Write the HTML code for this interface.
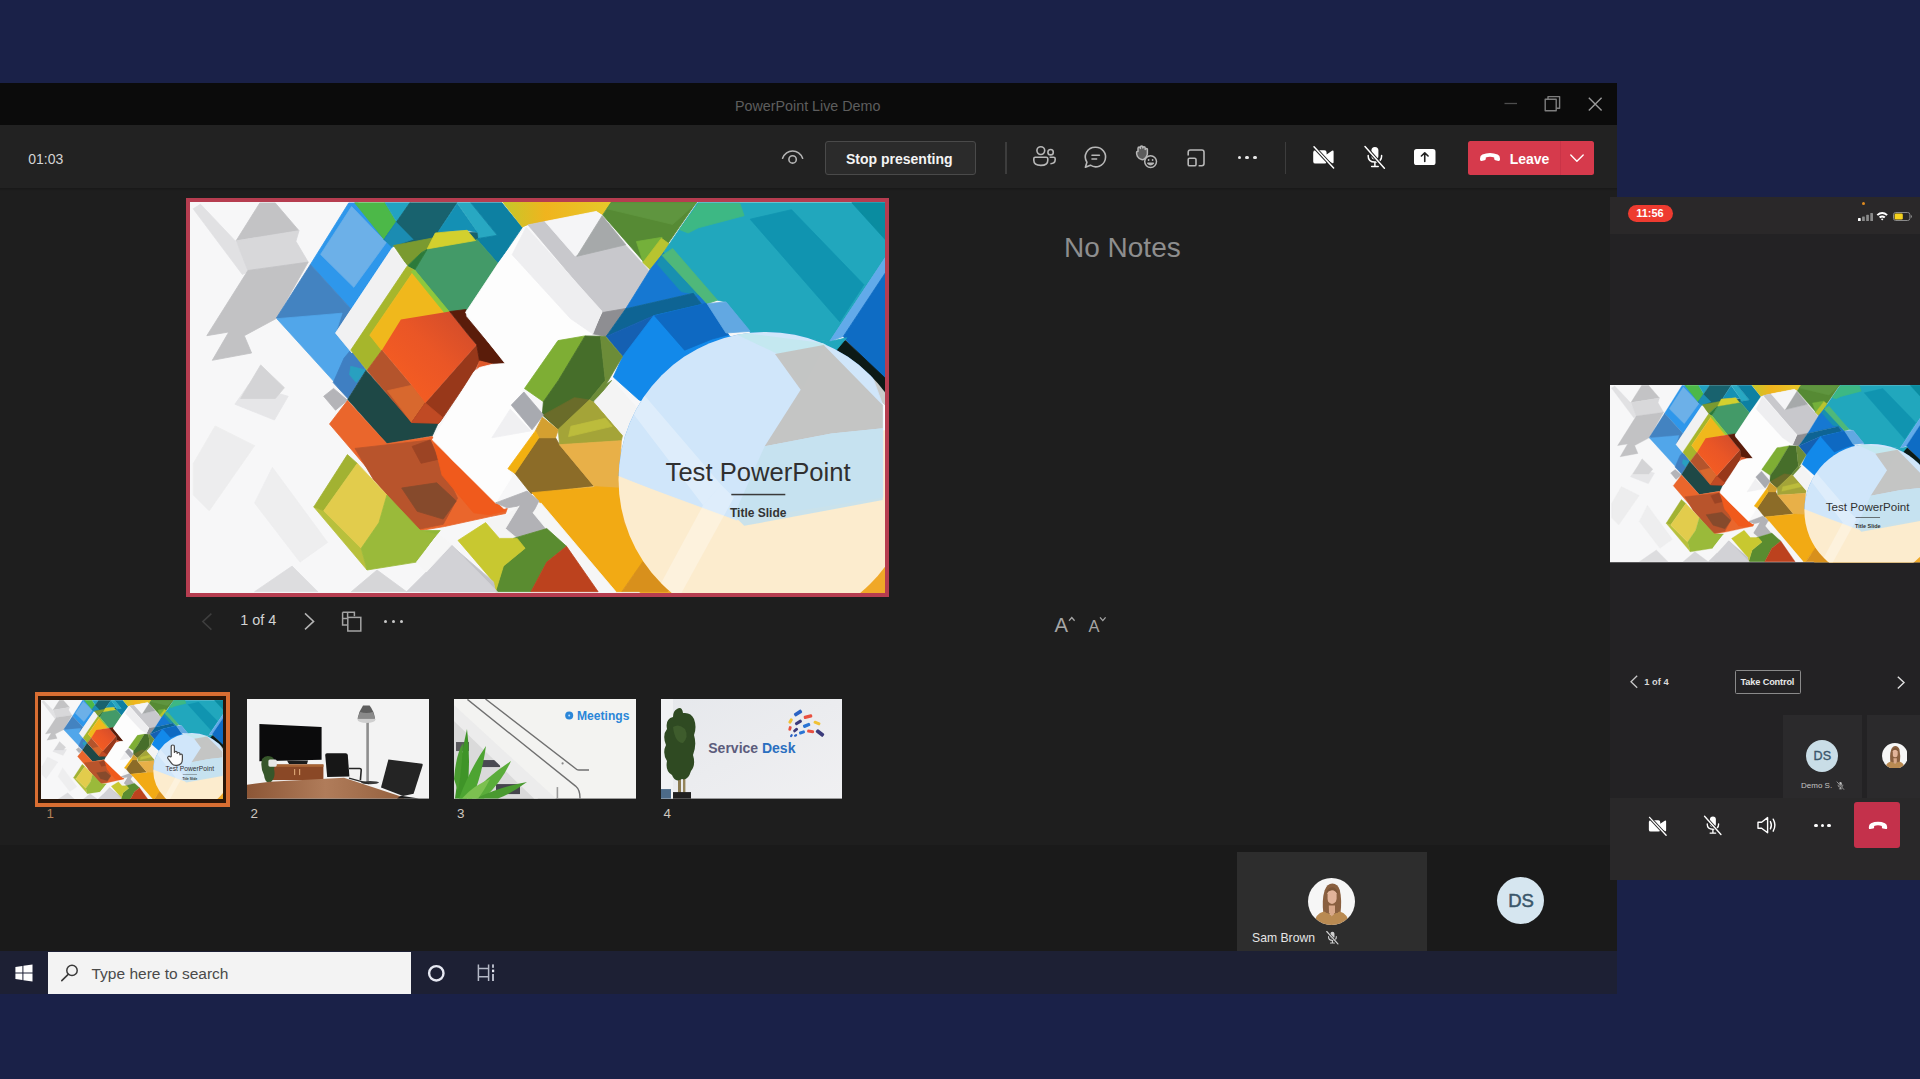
<!DOCTYPE html><html><head><meta charset="utf-8"><title>PowerPoint Live Demo</title><style>
*{box-sizing:border-box;margin:0;padding:0}
html,body{width:1920px;height:1079px;overflow:hidden;background:#1a2148;font-family:"Liberation Sans",sans-serif}
.abs{position:absolute}
#win{position:absolute;left:0;top:83px;width:1617px;height:868px;background:#1d1d1d;overflow:hidden}
#titlebar{position:absolute;left:0;top:0;width:1617px;height:42px;background:#0b0b0b}
#titlebar .t{position:absolute;left:735px;top:16.4px;line-height:1;font-size:14.3px;color:#5e5e5e;white-space:nowrap;letter-spacing:0}
#toolbar{position:absolute;left:0;top:42px;width:1617px;height:63px;background:#222222}
#content{position:absolute;left:0;top:105px;width:1617px;height:657px;background:linear-gradient(#181818,#1e1e1e 3px,#1e1e1e)}
#bottomstrip{position:absolute;left:0;top:762px;width:1617px;height:106px;background:#1a1a1a}
.txt{position:absolute;white-space:nowrap}
#taskbar{position:absolute;left:0;top:951px;width:1617px;height:42.5px;background:#1d2034}
#search{position:absolute;left:48px;top:0.5px;width:363px;height:42.5px;background:#f3f3f3}
#phone{position:absolute;left:1610px;top:197px;width:310px;height:683px;background:#232224;overflow:hidden}
</style></head><body>
<svg width="0" height="0" style="position:absolute"><defs><linearGradient id="gcube" x1="0" y1="1" x2="1" y2="0"><stop offset="0" stop-color="#fa6020"/><stop offset="0.55" stop-color="#ea5626"/><stop offset="1" stop-color="#cc4a2c"/></linearGradient><linearGradient id="gyel" x1="0" y1="0" x2="1" y2="0"><stop offset="0" stop-color="#c4c82a"/><stop offset="0.4" stop-color="#f0b41e"/><stop offset="1" stop-color="#e6c82a"/></linearGradient><clipPath id="ccirc"><circle cx="576" cy="277.5" r="147.5"/></clipPath><symbol id="art" viewBox="0 0 695.5 391.5" preserveAspectRatio="none"><rect width="695.5" height="391.5" fill="#f7f7f8"/><polygon points="3.2,6.8 10.5,2.2 45.1,38.8 59.8,68.9 52.4,72.5" fill="#e1e1e3" stroke="#e1e1e3" stroke-width="0.8" stroke-linejoin="round"/><polygon points="58.7,182.5 98.2,194.3 84.4,218.0 44.9,202.2" fill="#e6e6e8" stroke="#e6e6e8" stroke-width="0.8" stroke-linejoin="round"/><polygon points="25.2,223.9 64.6,243.7 19.2,308.8 3.4,293.0 3.4,261.4" fill="#ededee" stroke="#ededee" stroke-width="0.8" stroke-linejoin="round"/><polygon points="64.6,389.7 102.1,364.1 127.8,389.7" fill="#dddddf" stroke="#dddddf" stroke-width="0.8" stroke-linejoin="round"/><polygon points="161.3,389.7 187.0,368.0 216.6,389.7" fill="#d6d6d8" stroke="#d6d6d8" stroke-width="0.8" stroke-linejoin="round"/><polygon points="82.4,265.4 137.6,340.4 110.0,360.1 64.6,300.9" fill="#eeeeef" stroke="#eeeeef" stroke-width="0.8" stroke-linejoin="round"/><polygon points="70.7,162.9 94.4,185.7 85.3,196.5 50.6,196.5" fill="#d4d4d6" stroke="#d4d4d6" stroke-width="0.8" stroke-linejoin="round"/><polygon points="133.7,194.3 143.6,186.4 157.4,198.3 145.5,208.2" fill="#b4b4b8" stroke="#b4b4b8" stroke-width="0.8" stroke-linejoin="round"/><polygon points="69.8,1.0 85.3,1.0 109.0,28.7 46.1,38.8" fill="#c3c3c5" stroke="#c3c3c5" stroke-width="0.8" stroke-linejoin="round"/><polygon points="46.1,38.8 109.0,28.7 105.9,39.3 118.2,60.1 57.9,68.5" fill="#d8d8da" stroke="#d8d8da" stroke-width="0.8" stroke-linejoin="round"/><polygon points="57.9,68.5 118.2,60.1 86.4,116.4 54.3,133.7 61.6,151.0 22.3,158.3 38.8,130.0 16.8,133.7" fill="#c2c2c4" stroke="#c2c2c4" stroke-width="0.8" stroke-linejoin="round"/><polygon points="120.4,62.5 158.7,1.0 168.4,1.0 202.2,45.5 161.1,107.2" fill="#2e97eb" stroke="#2e97eb" stroke-width="0.8" stroke-linejoin="round"/><polygon points="161.6,4.6 196.3,40.6 163.8,85.3 130.6,52.4" fill="#6cb0e8" stroke="#6cb0e8" stroke-width="0.8" stroke-linejoin="round"/><polygon points="86.4,116.0 120.4,62.5 160.9,106.9 154.7,116.4 145.6,131.3" fill="#4383c1" stroke="#4383c1" stroke-width="0.8" stroke-linejoin="round"/><polygon points="86.8,116.7 152.1,111.2 145.6,131.3 162.9,152.0 143.7,179.3" fill="#51a6ea" stroke="#51a6ea" stroke-width="0.8" stroke-linejoin="round"/><polygon points="143.2,180.6 154.0,156.2 160.8,148.1 176.0,167.7 158.1,196.8" fill="#3f7fc2" stroke="#3f7fc2" stroke-width="0.8" stroke-linejoin="round"/><polygon points="160.8,164.3 176.0,168.1 166.2,180.6 159.5,172.5" fill="#28a0c0" stroke="#28a0c0" stroke-width="0.8" stroke-linejoin="round"/><polygon points="164.7,0.8 195.2,0.8 206.3,19.8 194.1,37.4" fill="#4cb848" stroke="#4cb848" stroke-width="0.8" stroke-linejoin="round"/><polygon points="194.1,37.4 206.6,19.8 248.3,29.7 287.9,30.4 290.0,37.8 237.2,48.6 203.6,44.2" fill="#18626e" stroke="#18626e" stroke-width="0.8" stroke-linejoin="round"/><polygon points="195.2,0.8 219.8,0.8 206.6,19.8" fill="#22a2c2" stroke="#22a2c2" stroke-width="0.8" stroke-linejoin="round"/><polygon points="194.1,37.4 206.3,19.8 223.6,37.1 204.0,43.9 201.7,45.0" fill="#1b8cb2" stroke="#1b8cb2" stroke-width="0.8" stroke-linejoin="round"/><polygon points="219.8,0.8 267.2,0.8 248.3,29.7 243.9,35.8 223.6,37.1 206.6,19.8" fill="#18626e" stroke="#18626e" stroke-width="0.8" stroke-linejoin="round"/><polygon points="248.3,29.7 267.2,1.4 287.9,30.4 277.1,28.3" fill="#1490b4" stroke="#1490b4" stroke-width="0.8" stroke-linejoin="round"/><polygon points="267.2,0.8 280.8,0.8 307.3,33.3 288.6,36.4 287.9,30.4" fill="#28a8c2" stroke="#28a8c2" stroke-width="0.8" stroke-linejoin="round"/><polygon points="280.8,0.8 311.9,0.8 332.2,25.6 307.8,61.2 286.6,37.1 288.6,36.4 307.3,33.3" fill="#0d80a2" stroke="#0d80a2" stroke-width="0.8" stroke-linejoin="round"/><polygon points="203.6,43.5 243.9,35.8 237.2,46.9 231.7,50.4 217.5,63.9" fill="#7a9a30" stroke="#7a9a30" stroke-width="0.8" stroke-linejoin="round"/><polygon points="237.2,46.9 285.6,38.5 286.6,37.1 307.8,61.2 277.8,108.1 258.8,110.0 224.7,68.0" fill="#439a68" stroke="#439a68" stroke-width="0.8" stroke-linejoin="round"/><polygon points="245.3,31.0 277.1,28.3 285.6,38.5 237.2,46.9" fill="#d2d02e" stroke="#d2d02e" stroke-width="0.8" stroke-linejoin="round"/><polygon points="217.5,63.9 231.7,50.4 236.9,47.7 224.7,68.0" fill="#2c7a3a" stroke="#2c7a3a" stroke-width="0.8" stroke-linejoin="round"/><polygon points="145.5,131.0 202.1,46.2 217.3,64.0 162.0,151.0" fill="#f1f1f2" stroke="#f1f1f2" stroke-width="0.8" stroke-linejoin="round"/><polygon points="217.1,64.2 224.3,68.0 179.8,133.2 192.0,148.1 177.1,168.4 160.8,148.1" fill="#a6b62c" stroke="#a6b62c" stroke-width="0.8" stroke-linejoin="round"/><polygon points="224.3,68.3 254.8,111.1 213.6,119.0 192.0,148.8 179.8,133.2" fill="#f0b81c" stroke="#f0b81c" stroke-width="0.8" stroke-linejoin="round"/><polygon points="221.2,69.6 224.7,68.0 259.5,110.0 254.8,111.1" fill="#8ec83c" stroke="#8ec83c" stroke-width="0.8" stroke-linejoin="round"/><polygon points="176.0,168.4 222.5,220.5 250.1,217.0 242.3,233.8 196.9,241.7 157.8,197.5" fill="#1e4846" stroke="#1e4846" stroke-width="0.8" stroke-linejoin="round"/><polygon points="139.5,222.0 157.5,198.5 196.9,241.7 242.3,234.5 303.5,310.5 317.3,306.5 315.5,311.5 300.5,314.5 254.5,324.5 230.5,328.5" fill="#ea662c" stroke="#ea662c" stroke-width="0.8" stroke-linejoin="round"/><polygon points="165.0,246.4 240.2,238.0 267.5,296.3 253.2,322.3 227.2,327.5 183.1,276.9" fill="#b8542c" stroke="#b8542c" stroke-width="0.8" stroke-linejoin="round"/><polygon points="211.7,286.0 246.7,280.8 266.2,298.9 253.2,317.1 227.2,309.3" fill="#864a2c" stroke="#864a2c" stroke-width="0.8" stroke-linejoin="round"/><polygon points="222.1,244.4 240.2,238.0 248.0,257.4 231.1,261.3" fill="#9c4424" stroke="#9c4424" stroke-width="0.8" stroke-linejoin="round"/><polygon points="244.2,241.7 315.3,308.8 299.5,312.8 283.7,310.8 252.1,273.3" fill="#f05a1c" stroke="#f05a1c" stroke-width="0.8" stroke-linejoin="round"/><polygon points="192.0,148.1 221.7,183.3 235.3,200.9 221.7,220.5 177.1,168.4" fill="#b4542c" stroke="#b4542c" stroke-width="0.8" stroke-linejoin="round"/><polygon points="197.4,188.7 221.7,183.3 235.3,200.9 221.7,220.5" fill="#d8682e" stroke="#d8682e" stroke-width="0.8" stroke-linejoin="round"/><polygon points="286.7,142.7 289.5,158.9 284.0,169.7 252.9,215.8 248.8,221.2 221.7,220.5 235.3,200.9" fill="#98381a" stroke="#98381a" stroke-width="0.8" stroke-linejoin="round"/><polygon points="235.3,200.9 252.9,215.8 248.8,221.2 221.7,220.5" fill="#c04a24" stroke="#c04a24" stroke-width="0.8" stroke-linejoin="round"/><polygon points="210.9,117.6 259.7,109.5 278.6,133.2 286.7,142.7 235.3,200.9 221.7,183.3 192.0,148.1" fill="url(#gcube)"/><polygon points="259.7,109.5 275.9,107.5 275.9,114.2 315.2,161.6 303.0,162.3 289.5,158.9 286.7,142.7 278.6,133.2" fill="#5a1c0a" stroke="#5a1c0a" stroke-width="0.8" stroke-linejoin="round"/><polygon points="289.5,158.9 303.0,162.3 292.2,166.4 286.1,168.4" fill="#e0582a" stroke="#e0582a" stroke-width="0.8" stroke-linejoin="round"/><polygon points="312.3,0.0 421.4,0.0 412.7,12.9 406.4,9.4 338.0,22.9 332.2,25.6" fill="url(#gyel)"/><polygon points="338.0,22.9 355.0,19.5 385.4,54.1 435.2,42.7 459.3,68.9 435.2,106.8 411.9,110.3" fill="#c8c8cc" stroke="#c8c8cc" stroke-width="0.8" stroke-linejoin="round"/><polygon points="355.0,19.5 406.4,9.4 411.9,13.7 385.3,54.2" fill="#f5f5f7" stroke="#f5f5f7" stroke-width="0.8" stroke-linejoin="round"/><polygon points="412.2,13.7 435.7,42.7 386.9,54.3" fill="#a6a9aa" stroke="#a6a9aa" stroke-width="0.8" stroke-linejoin="round"/><polygon points="411.9,110.6 435.7,106.5 416.2,134.4 402.4,131.8" fill="#8e8e92" stroke="#8e8e92" stroke-width="0.8" stroke-linejoin="round"/><polygon points="336.0,24.3 411.9,110.3 401.5,132.7 368.0,138.6 335.1,185.4 321.3,203.1 342.0,227.8 346.5,228.9 319.0,267.9 322.5,273.6 305.5,300.9 242.3,237.8 284.0,169.7 289.5,165.5 302.5,162.3 315.2,161.6 275.5,110.5 308.3,61.2" fill="#fdfdfd" stroke="#fdfdfd" stroke-width="0.8" stroke-linejoin="round"/><polygon points="322.2,52.7 336.1,24.9 411.8,109.0 402.8,131.9 380.5,116.6" fill="#eeeef0" stroke="#eeeef0" stroke-width="0.8" stroke-linejoin="round"/><polygon points="421.4,0.0 506.7,0.0 460.2,67.2 412.7,12.9" fill="#568a34" stroke="#568a34" stroke-width="0.8" stroke-linejoin="round"/><polygon points="421.4,0.8 506.7,0.8 482.6,22.4 417.1,6.8" fill="#5f953f" stroke="#5f953f" stroke-width="0.8" stroke-linejoin="round"/><polygon points="446.4,39.6 472.2,35.3 453.3,60.6" fill="#74b03a" stroke="#74b03a" stroke-width="0.8" stroke-linejoin="round"/><polygon points="471.4,36.2 480.8,43.1 460.2,67.5 452.9,60.6" fill="#b8c430" stroke="#b8c430" stroke-width="0.8" stroke-linejoin="round"/><polygon points="460.2,67.5 473.9,50.3 517.1,101.7 511.9,102.5 503.3,91.3 435.7,106.8" fill="#1678d2" stroke="#1678d2" stroke-width="0.8" stroke-linejoin="round"/><polygon points="467.1,62.0 473.9,50.3 508.4,93.1 491.2,89.6" fill="#1890b0" stroke="#1890b0" stroke-width="0.8" stroke-linejoin="round"/><polygon points="435.7,106.8 503.3,91.3 511.9,102.5 463.6,113.7 416.2,134.4" fill="#0e6494" stroke="#0e6494" stroke-width="0.8" stroke-linejoin="round"/><polygon points="416.2,134.4 463.6,113.7 494.6,148.2 432.6,154.3" fill="#1560b2" stroke="#1560b2" stroke-width="0.8" stroke-linejoin="round"/><polygon points="463.6,113.7 511.9,102.5 536.0,131.0 570.5,158.5 510.5,218.5 449.0,198.0 423.3,175.0 432.5,154.8" fill="#1289ea" stroke="#1289ea" stroke-width="0.8" stroke-linejoin="round"/><polygon points="464.5,113.7 517.4,101.0 538.6,132.7 522.2,137.0 494.6,148.2" fill="#0e69c2" stroke="#0e69c2" stroke-width="0.8" stroke-linejoin="round"/><polygon points="507.6,0.8 695.5,0.8 695.5,55.1 639.5,139.6 560.2,130.1 536.0,99.9 527.4,98.2 473.9,49.9" fill="#21a7bd" stroke="#21a7bd" stroke-width="0.8" stroke-linejoin="round"/><polygon points="560.2,17.2 601.5,7.7 673.9,82.7 649.8,119.8" fill="#1094b0" stroke="#1094b0" stroke-width="0.8" stroke-linejoin="round"/><polygon points="661.9,0.8 695.5,0.8 695.5,37.9" fill="#0a8ca0" stroke="#0a8ca0" stroke-width="0.8" stroke-linejoin="round"/><polygon points="508.4,1.3 549.8,1.3 554.1,13.7 508.4,25.8 498.1,31.0 489.5,27.5" fill="#3db884" stroke="#3db884" stroke-width="0.8" stroke-linejoin="round"/><polygon points="472.2,53.4 482.6,46.5 527.4,98.2 517.1,101.7" fill="#4fb87a" stroke="#4fb87a" stroke-width="0.8" stroke-linejoin="round"/><polygon points="517.1,101.7 536.0,99.9 560.2,129.3 536.0,131.0" fill="#62a8e2" stroke="#62a8e2" stroke-width="0.8" stroke-linejoin="round"/><polygon points="695.5,55.1 695.5,70.6 653.3,134.4 639.5,139.6" fill="#62aaea" stroke="#62aaea" stroke-width="0.8" stroke-linejoin="round"/><polygon points="695.5,70.6 695.5,178.5 656.8,139.0 653.3,134.4" fill="#0e6cc4" stroke="#0e6cc4" stroke-width="0.8" stroke-linejoin="round"/><polygon points="632.5,142.9 655.5,138.5 695.3,176.2 695.3,203.2" fill="#0c1a16" stroke="#0c1a16" stroke-width="0.8" stroke-linejoin="round"/><polygon points="368.0,138.6 395.1,133.9 368.3,178.5 353.4,199.7 334.5,186.5" fill="#7eae34" stroke="#7eae34" stroke-width="0.8" stroke-linejoin="round"/><polygon points="395.1,133.9 410.5,134.3 415.3,178.5 399.3,198.0 368.3,227.2 352.3,212.9 353.4,199.7 368.3,178.5" fill="#466e2a" stroke="#466e2a" stroke-width="0.8" stroke-linejoin="round"/><polygon points="353.4,212.9 384.4,195.7 399.3,198.0 368.3,227.2" fill="#6a6c2a" stroke="#6a6c2a" stroke-width="0.8" stroke-linejoin="round"/><polygon points="410.5,134.3 415.5,134.4 432.5,154.5 416.0,182.5 421.6,178.5 403.8,200.3 399.3,198.0 415.3,178.5" fill="#6c8c38" stroke="#6c8c38" stroke-width="0.8" stroke-linejoin="round"/><polygon points="321.3,203.1 333.9,190.0 353.4,212.9 342.0,227.8" fill="#a8aab0" stroke="#a8aab0" stroke-width="0.8" stroke-linejoin="round"/><polygon points="320.2,207.1 340.8,228.9 301.9,235.8" fill="#f0f0f2" stroke="#f0f0f2" stroke-width="0.8" stroke-linejoin="round"/><polygon points="410.5,268.5 695.5,228.5 695.5,391.5 450.5,391.5" fill="#f0a828" stroke="#f0a828" stroke-width="0.8" stroke-linejoin="round"/><polygon points="348.8,235.8 365.5,235.8 369.5,242.7 403.8,283.9 340.8,291.4 324.8,271.3" fill="#8c6c28" stroke="#8c6c28" stroke-width="0.8" stroke-linejoin="round"/><polygon points="345.4,228.9 352.3,215.2 368.3,227.8 365.5,235.8 348.8,235.8" fill="#d4a030" stroke="#d4a030" stroke-width="0.8" stroke-linejoin="round"/><polygon points="317.9,266.7 345.4,228.9 348.8,235.8 324.8,271.3" fill="#f2b010" stroke="#f2b010" stroke-width="0.8" stroke-linejoin="round"/><polygon points="368.3,227.2 399.3,198.0 403.8,200.3 432.5,233.5 431.3,238.7 369.5,242.7" fill="#a4a438" stroke="#a4a438" stroke-width="0.8" stroke-linejoin="round"/><polygon points="380.9,224.3 415.3,216.3 422.2,224.3 378.6,234.6" fill="#bcbc3c" stroke="#bcbc3c" stroke-width="0.8" stroke-linejoin="round"/><polygon points="369.5,242.7 431.3,238.7 427.9,300.0 415.3,300.0 403.8,283.9" fill="#e8b048" stroke="#e8b048" stroke-width="0.8" stroke-linejoin="round"/><polygon points="342.0,290.7 406.1,284.7 428.8,286.1 432.8,320.6 454.5,357.2 431.8,389.7 425.9,389.7 348.9,299.3" fill="#f2aa14" stroke="#f2aa14" stroke-width="0.8" stroke-linejoin="round"/><polygon points="454.5,357.2 483.1,383.8 477.2,389.7 431.8,389.7" fill="#d8901c" stroke="#d8901c" stroke-width="0.8" stroke-linejoin="round"/><polygon points="305.5,300.9 337.1,289.1 348.9,298.9 343.0,310.8 356.8,326.6 323.3,336.4 315.4,326.6 329.2,303.9 317.3,305.8" fill="#b2b2b6" stroke="#b2b2b6" stroke-width="0.8" stroke-linejoin="round"/><polygon points="343.0,310.8 350.9,300.9 425.9,389.7 408.1,389.7" fill="#f6f6f6" stroke="#f6f6f6" stroke-width="0.8" stroke-linejoin="round"/><polygon points="295.6,318.7 317.3,312.8 329.2,303.9 315.4,326.6 327.2,336.4 309.4,336.4" fill="#f4f4f4" stroke="#f4f4f4" stroke-width="0.8" stroke-linejoin="round"/><polygon points="323.3,336.4 356.8,326.6 376.5,344.3 356.8,360.1 341.0,389.7 305.5,389.7 313.4,364.1 335.1,346.3" fill="#5a8c30" stroke="#5a8c30" stroke-width="0.8" stroke-linejoin="round"/><polygon points="356.8,360.1 376.5,344.3 408.1,389.7 341.0,389.7" fill="#bc421e" stroke="#bc421e" stroke-width="0.8" stroke-linejoin="round"/><polygon points="268.0,338.4 295.6,320.6 309.4,336.4 327.2,336.4 335.1,346.3 313.4,364.1 305.5,389.7 303.5,379.9" fill="#c8c830" stroke="#c8c830" stroke-width="0.8" stroke-linejoin="round"/><polygon points="230.5,328.5 250.2,328.5 230.5,352.2" fill="#90b838" stroke="#90b838" stroke-width="0.8" stroke-linejoin="round"/><polygon points="238.4,368.0 260.1,342.4 303.5,379.9 305.5,389.7 230.5,389.7" fill="#c2c2c6" stroke="#c2c2c6" stroke-width="0.8" stroke-linejoin="round"/><polygon points="123.8,304.9 133.7,308.8 171.2,346.3 177.1,368.0" fill="#b8c03c" stroke="#b8c03c" stroke-width="0.8" stroke-linejoin="round"/><polygon points="157.4,252.6 167.3,261.4 133.7,308.8 123.8,304.9" fill="#a2b232" stroke="#a2b232" stroke-width="0.8" stroke-linejoin="round"/><polygon points="167.3,261.4 196.9,293.0 189.0,320.6 171.2,346.3 133.7,308.8" fill="#e2cc4c" stroke="#e2cc4c" stroke-width="0.8" stroke-linejoin="round"/><polygon points="196.9,293.0 230.4,328.5 246.2,332.5 226.5,360.1 177.1,368.0 171.2,346.3 189.0,320.6" fill="#9aba3a" stroke="#9aba3a" stroke-width="0.8" stroke-linejoin="round"/><polygon points="236.3,370.0 262.0,343.3 307.4,389.7 216.6,389.7" fill="#d2d2d6" stroke="#d2d2d6" stroke-width="0.8" stroke-linejoin="round"/><polygon points="226.5,360.1 248.2,332.5 262.0,342.4 236.3,370.0" fill="#f6f6f6" stroke="#f6f6f6" stroke-width="0.8" stroke-linejoin="round"/><polygon points="560.2,130.1 639.5,139.6 656.7,135.8 629.1,168.9 577.4,160.3" fill="#21a7bd" stroke="#21a7bd" stroke-width="0.8" stroke-linejoin="round"/><polygon points="404.2,199.3 423.3,179.5 470.5,232.5 450.5,253.5" fill="#f4f4f4" stroke="#f4f4f4" stroke-width="0.8" stroke-linejoin="round"/><g clip-path="url(#ccirc)"><polygon points="425.9,195.5 451.6,118.5 662.0,118.5 692.8,203.2 692.8,298.1 546.5,321.2 425.9,272.5" fill="#2a8ce6" stroke="#2a8ce6" stroke-width="0.8" stroke-linejoin="round"/><polygon points="420.8,272.5 546.5,318.7 695.3,295.6 695.3,398.2 425.9,398.2" fill="#f2aa20" stroke="#f2aa20" stroke-width="0.8" stroke-linejoin="round"/></g><circle cx="576" cy="277.5" r="147.5" fill="#ffffff" fill-opacity="0.78"/><g clip-path="url(#ccirc)"><polygon points="538.8,128.8 636.3,141.6 613.2,185.2 587.6,151.9" fill="#c2e8ee" fill-opacity="0.9"/><polygon points="585.0,151.9 633.7,142.9 692.8,203.2 692.8,226.3 641.4,231.4 574.7,244.2 610.7,187.8" fill="#c3c3c1" fill-opacity="0.95"/><polygon points="574.7,244.2 641.4,231.4 692.8,226.3 692.8,298.1 554.2,323.8 543.9,313.5" fill="#c4e1ee" fill-opacity="0.9"/><polygon points="438.7,205.7 454.1,192.9 531.1,282.7 513.1,303.3" fill="#ffffff" fill-opacity="0.3"/><polygon points="513.1,303.3 531.1,282.7 543.9,295.6 487.5,398.2 461.8,398.2" fill="#ffffff" fill-opacity="0.3"/></g><text x="475.6" y="278.9" font-family="Liberation Sans, sans-serif" font-size="25.6" fill="#303030">Test PowerPoint</text><rect x="541.3" y="291.8" width="54" height="1.5" fill="#3a3a3a"/><text x="540" y="314.8" font-family="Liberation Sans, sans-serif" font-size="12" font-weight="700" fill="#333">Title Slide</text></symbol></defs></svg>
<div id="win">
<div id="titlebar"><div class="t">PowerPoint Live Demo</div><svg class="abs" style="left:1504px;top:19px;" width="14" height="3" viewBox="0 0 14 3"><path d="M0.5 1.5H13" stroke="#4e4e4e" stroke-width="1.3" fill="none"/></svg><svg class="abs" style="left:1544px;top:12px;" width="18" height="18" viewBox="0 0 18 18"><path d="M1.2 4.2H12.2V15.8H1.2Z M4 4V1.6H15.6V13.2H12.4" stroke="#7e7e7e" stroke-width="1.4" fill="none" stroke-linejoin="round"/></svg><svg class="abs" style="left:1587px;top:13px;" width="16" height="16" viewBox="0 0 16 16"><path d="M1.8 1.8L14.6 14.4M14.6 1.8L1.8 14.4" stroke="#9a9a9a" stroke-width="1.4" fill="none"/></svg></div>
<div id="toolbar"><div class="txt" style="left:28.3px;top:27.099999999999994px;font-size:14px;line-height:1;color:#d4d4d4;font-weight:400;">01:03</div><svg class="abs" style="left:780px;top:23px;" width="26" height="20" viewBox="0 0 26 20"><path d="M2.6 10.2C5 4.6 9 3 12.6 3S20.2 4.6 22.6 10.2" stroke="#b4b4b4" stroke-width="1.6" fill="none" stroke-linecap="round"/><circle cx="12.6" cy="11.4" r="3.7" stroke="#b4b4b4" stroke-width="1.6" fill="none"/></svg><div class="abs" style="left:824.5px;top:16px;width:151px;height:33.5px;background:#2b2b2b;border:1px solid #4a4a4a;border-radius:3px"></div><div class="txt" style="left:846px;top:27.099999999999994px;font-size:14px;line-height:1;color:#f4f4f4;font-weight:700;">Stop presenting</div><div class="abs" style="left:1005px;top:16.5px;width:1.5px;height:32.5px;background:#3d3d3d"></div><svg class="abs" style="left:1032px;top:19px;" width="26" height="24" viewBox="0 0 26 24"><g stroke="#b8b8b8" stroke-width="1.6" fill="none"><circle cx="8.8" cy="6.6" r="3.9"/><circle cx="18.6" cy="8.2" r="2.7"/><path d="M3.2 13.2H14.2Q15.8 13.2 15.8 14.8V16.2Q15.8 21.4 8.8 21.4T1.8 16.2V14.8Q1.8 13.2 3.2 13.2Z"/><path d="M17.6 13.2H21.6Q23.2 13.2 23.2 14.8V15.6Q23.2 19.6 18.4 19.8"/></g></svg><svg class="abs" style="left:1082px;top:19px;" width="28" height="26" viewBox="0 0 28 26"><g stroke="#b8b8b8" stroke-width="1.6" fill="none" stroke-linecap="round" stroke-linejoin="round"><path d="M13.4 3.2A9.8 9.8 0 1 1 8.4 21.2L3.4 23.2L4.9 18.3A9.8 9.8 0 0 1 13.4 3.2Z"/><path d="M10 11.2H17.4M10 15H14.6"/></g></svg><svg class="abs" style="left:1133px;top:18px;" width="28" height="28" viewBox="0 0 28 28"><g stroke="#b8b8b8" stroke-width="1.5" fill="none" stroke-linejoin="round"><path d="M5 8.4V5.4Q5 4 6.2 4T7.4 5.4V4.4Q7.4 3 8.6 3T9.8 4.4V5Q9.8 3.8 11 3.8T12.2 5V6.4Q12.2 5.4 13.3 5.4T14.4 6.6V10.6Q14.4 12 13.6 13.2L12.6 14.8Q11 17 8.6 16.6T4.4 13.4Q3.4 11.4 3.6 9.4Q3.7 8.2 5 8.4Z" fill="#8a8a8a" fill-opacity="0.55"/><circle cx="17.6" cy="18.6" r="5.9" fill="#222"/><path d="M14.8 20.2Q17.6 23 20.4 20.2Z"/></g><circle cx="15.6" cy="17" r="0.9" fill="#b8b8b8"/><circle cx="19.6" cy="17" r="0.9" fill="#b8b8b8"/></svg><svg class="abs" style="left:1185px;top:22px;" width="22" height="22" viewBox="0 0 22 22"><g stroke="#b8b8b8" stroke-width="1.6" fill="none" stroke-linejoin="round"><path d="M3.2 8.6V5.2Q3.2 3 5.4 3H16.8Q19 3 19 5.2V16.6Q19 18.8 16.8 18.8H13.6"/><rect x="3.2" y="11.2" width="7.8" height="7.6" rx="1.4"/></g></svg><div class="abs" style="left:1237.6px;top:30.599999999999994px;width:3.6px;height:3.6px;border-radius:50%;background:#e8e8e8"></div><div class="abs" style="left:1245.3px;top:30.599999999999994px;width:3.6px;height:3.6px;border-radius:50%;background:#e8e8e8"></div><div class="abs" style="left:1253.0px;top:30.599999999999994px;width:3.6px;height:3.6px;border-radius:50%;background:#e8e8e8"></div><div class="abs" style="left:1284.5px;top:16.5px;width:1.5px;height:32.5px;background:#3d3d3d"></div><svg class="abs" style="left:1311px;top:19px;" width="26" height="26" viewBox="0 0 26 26"><path d="M2.2 8.4Q2.2 6.2 4.4 6.2H13.4Q15.6 6.2 15.6 8.4V10.4L21 6.8Q22.6 6 22.6 7.8V18Q22.6 19.8 21 19L15.6 15.6V17.4Q15.6 19.6 13.4 19.6H4.4Q2.2 19.6 2.2 17.4Z" fill="#fff"/><path d="M3 2.8L22 23.4" stroke="#222" stroke-width="3.4"/><path d="M3 2.8L22.6 24" stroke="#fff" stroke-width="1.5" stroke-linecap="round"/></svg><svg class="abs" style="left:1362px;top:19px;" width="26" height="26" viewBox="0 0 26 26"><rect x="9.4" y="3" width="7" height="12.4" rx="3.5" fill="#fff"/><path d="M6.2 11.6V12.2Q6.2 18 12.9 18T19.6 12.2V11.6M12.9 18V22.4M9.6 22.6H16.2" stroke="#fff" stroke-width="1.5" fill="none" stroke-linecap="round"/><path d="M3.4 3L21.6 23.4" stroke="#222" stroke-width="3.4"/><path d="M3 2.6L22.4 24.2" stroke="#fff" stroke-width="1.5" stroke-linecap="round"/></svg><svg class="abs" style="left:1413px;top:23px;" width="24" height="18" viewBox="0 0 24 18"><rect x="1" y="1.1" width="21.5" height="15.9" rx="2.6" fill="#fff"/><path d="M11.75 13.4V5M8.4 8L11.75 4.8L15.1 8" stroke="#222" stroke-width="1.6" fill="none" stroke-linecap="round" stroke-linejoin="round"/></svg><div class="abs" style="left:1468.2px;top:16px;width:126.3px;height:33.8px;background:#d63a4c;border-radius:2.5px"></div><div class="abs" style="left:1559.5px;top:16px;width:1px;height:33.8px;background:#c93447"></div><svg class="abs" style="left:1478px;top:25px;" width="24" height="14" viewBox="0 0 24 14"><path d="M2 8.6Q2 5.8 4.4 4.6Q8 3 12 3T19.6 4.6Q22 5.8 22 8.6V9.6Q22 11.2 20.4 10.9L17.4 10.3Q16.2 10 16.2 8.8V7.6Q14.2 6.8 12 6.8T7.8 7.6V8.8Q7.8 10 6.6 10.3L3.6 10.9Q2 11.2 2 9.6Z" fill="#fff"/></svg><div class="txt" style="left:1509.7px;top:27.099999999999994px;font-size:14px;line-height:1;color:#ffffff;font-weight:700;">Leave</div><svg class="abs" style="left:1569px;top:28px;" width="16" height="10" viewBox="0 0 16 10"><path d="M1.8 2L7.9 8.2L14.2 2" stroke="#fff" stroke-width="1.4" fill="none" stroke-linecap="round" stroke-linejoin="round"/></svg></div>
<div id="content"><div class="abs" style="left:186px;top:10px;width:702.5px;height:398.5px;background:#b63d50"></div><svg class="abs" style="left:189.5px;top:13.5px" width="695.5" height="391.5" viewBox="0 0 695.5 391.5"><use href="#art"/></svg><svg class="abs" style="left:200px;top:424px;" width="14" height="20" viewBox="0 0 14 20"><path d="M11.4 1.6L2.8 9.6L11.4 17.6" stroke="#3e3e3e" stroke-width="1.5" fill="none"/></svg><div class="txt" style="left:240.3px;top:425px;font-size:14.4px;line-height:1;color:#d4d4d4;font-weight:400;">1 of 4</div><svg class="abs" style="left:302px;top:424px;" width="14" height="20" viewBox="0 0 14 20"><path d="M3 1.4L11.6 9.4L3 17.4" stroke="#b4b4b4" stroke-width="1.5" fill="none"/></svg><svg class="abs" style="left:340px;top:422px;" width="24" height="24" viewBox="0 0 24 24"><g stroke="#a4a4a4" stroke-width="1.5" fill="none"><path d="M2.6 2.2H14.4V6.2M2.6 2.2V15H7.4M7.6 2.2V7.6M2.6 8.6H7.4"/><rect x="7.8" y="7.4" width="13" height="13.6"/></g></svg><div class="abs" style="left:384.0px;top:431.79999999999995px;width:3px;height:3px;border-radius:50%;background:#c8c8c8"></div><div class="abs" style="left:391.8px;top:431.79999999999995px;width:3px;height:3px;border-radius:50%;background:#c8c8c8"></div><div class="abs" style="left:399.6px;top:431.79999999999995px;width:3px;height:3px;border-radius:50%;background:#c8c8c8"></div><div class="txt" style="left:1064px;top:46.19999999999999px;line-height:1;font-size:28px;color:#8e8e8e">No Notes</div><div class="txt" style="left:1054.6px;top:427.20000000000005px;font-size:20.3px;line-height:1;color:#a6a6a6;font-weight:400;">A</div><svg class="abs" style="left:1067.5px;top:427.5px;" width="8" height="6" viewBox="0 0 8 6"><path d="M1 4.8L3.8 1.6L6.6 4.8" stroke="#a6a6a6" stroke-width="1.3" fill="none"/></svg><div class="txt" style="left:1088.4px;top:430.29999999999995px;font-size:16.5px;line-height:1;color:#a6a6a6;font-weight:400;">A</div><svg class="abs" style="left:1099.3px;top:428px;" width="8" height="6" viewBox="0 0 8 6"><path d="M1 1.4L3.8 4.6L6.6 1.4" stroke="#a6a6a6" stroke-width="1.3" fill="none"/></svg><div class="abs" style="left:34.7px;top:504.4px;width:194.9px;height:114.2px;background:#d96e32"></div><div class="abs" style="left:38px;top:507.70000000000005px;width:188.3px;height:107.6px;background:#2a1609"></div><svg class="abs" style="left:40.9px;top:511.5px" width="182.2" height="99.7" viewBox="0 0 695.5 391.5" preserveAspectRatio="none"><use href="#art"/></svg><svg class="abs" style="left:165.6px;top:556px" width="18" height="23" viewBox="0 0 18 23"><path d="M5.2 12.6V2.8Q5.2 1 6.8 1T8.4 2.8V8.4Q8.6 7.2 9.9 7.3T11.2 8.8V9.4Q11.5 8.4 12.7 8.5T13.9 10V10.8Q14.2 10 15.3 10.1T16.4 11.6V15.6Q16.4 18.4 14.8 19.8T11 21.4H9.6Q7.2 21.4 5.8 19.6L2 14.6Q1.2 13.4 2.2 12.6T4.2 12.8Z" fill="#fdfdfd" stroke="#4a4a4a" stroke-width="1.2" stroke-linejoin="round"/></svg><svg class="abs" style="left:247px;top:511.4px" width="182" height="99.6" viewBox="0 0 182 99.5" preserveAspectRatio="none"><rect width="182" height="99.5" fill="#f3f3f3"/><defs><linearGradient id="gtab" x1="0" y1="0" x2="1" y2="0"><stop offset="0" stop-color="#8c5636"/><stop offset="0.5" stop-color="#b07c5a"/><stop offset="1" stop-color="#94603e"/></linearGradient></defs><rect x="119.3" y="21" width="2.6" height="62" fill="#8e8e8e"/><ellipse cx="119.5" cy="20.5" rx="9" ry="3.6" fill="#cfcfcf"/><path d="M116 6.4H122.6Q127 12 128 19.5H110.6Q112 12 116 6.4Z" fill="#5e5e5e"/><path d="M113 13Q119.5 15 126 13L128 19.5H110.6Z" fill="#8a8a8a"/><ellipse cx="123" cy="83.5" rx="9" ry="1.6" fill="#3a3a3a"/><rect x="23" y="65.4" width="53.4" height="15.6" fill="#8a4826"/><rect x="23" y="65.4" width="53.4" height="2.4" fill="#a86434"/><rect x="47" y="70" width="1.2" height="6" fill="#d8a070"/><rect x="52" y="70" width="1.2" height="6" fill="#d8a070"/><path d="M12.4 25L74.6 28V60.6L12.4 62.2Z" fill="#0b0b0c"/><path d="M40 61.4H61L60 65H42Z" fill="#1a1a1a"/><path d="M15 60Q19 55 25 58Q30 62 27 70Q29 78 24 83Q18 85 17 76Q13 68 15 60Z" fill="#36562a"/><rect x="21.4" y="60.4" width="8.4" height="7.2" rx="1.6" fill="#e6e6e6"/><path d="M0 85.6L23 82.6L97 78.6L157 98.4V99.5H0Z" fill="url(#gtab)"/><path d="M78.2 56Q78.2 54.2 80 54.2H98.6Q100.6 54.2 100.8 56L102.4 77.4L80.2 78Z" fill="#171717"/><path d="M102 69.4H112.6Q114.4 69.4 114.2 71.2L113.4 81" stroke="#262626" stroke-width="1.6" fill="none"/><path d="M102 79L122 84.6" stroke="#2a2a2a" stroke-width="1.4"/><path d="M141.4 60.4L175.2 64.6Q176 65 175.6 66.4L166.6 94.6L156 97L134 88.4Z" fill="#242424"/><path d="M154 96.6L172 99.5H150Z" fill="#1a1a1a"/></svg><svg class="abs" style="left:453.6px;top:511.4px" width="182.4" height="99.6" viewBox="0 0 182.4 99.5" preserveAspectRatio="none"><rect width="182.4" height="99.5" fill="#f3f3f1"/><path d="M0 16V99.5H84Z" fill="#dadada"/><rect x="2" y="43" width="13" height="9" fill="#5a5a5e"/><rect x="26" y="61" width="20" height="7" fill="#4a4a52"/><rect x="42" y="85" width="24" height="10" fill="#45454c"/><path d="M0 6V22L80 99.5H102Z" fill="#ececec"/><path d="M31.5 0L122.8 70.4Q123.6 71 125 71H135" stroke="#707070" stroke-width="1.4" fill="none"/><path d="M13.4 0.4L121.6 87Q126.2 91 126 99.5" stroke="#707070" stroke-width="1.4" fill="none"/><path d="M103.4 88V99.5" stroke="#9a9a9a" stroke-width="1.6"/><circle cx="108.6" cy="64.4" r="1.1" fill="#888"/><path d="M1 99.5Q6 60 13 30Q17 60 13 99.5Z" fill="#3f9428"/><path d="M0 80Q2 55 9 44Q8 70 4 92Z" fill="#4a9c30"/><path d="M5 99.5Q16 70 32 47Q28 76 18 99.5Z" fill="#4da432"/><path d="M14 99.5Q32 78 57 62Q48 82 30 99.5Z" fill="#5aac3a"/><path d="M22 99.5Q44 88 73 83Q58 94 44 99.5Z" fill="#4a9a30"/><path d="M8 99.5Q20 86 36 80Q30 92 24 99.5Z" fill="#7cc050"/><circle cx="115.2" cy="16.4" r="4" fill="#2b86d8"/><circle cx="115.2" cy="16.4" r="1" fill="#bfe0ff"/><text x="123" y="21.4" font-family="Liberation Sans, sans-serif" font-weight="700" font-size="12.1" fill="#2b86d8">Meetings</text></svg><svg class="abs" style="left:660.6px;top:511.4px" width="181.5" height="99.6" viewBox="0 0 181.5 99.5" preserveAspectRatio="none"><defs><linearGradient id="gw4" x1="0" y1="0" x2="1" y2="1"><stop offset="0" stop-color="#e6e8ec"/><stop offset="1" stop-color="#f0f0f2"/></linearGradient></defs><rect width="181.5" height="99.5" fill="url(#gw4)"/><rect width="12" height="99.5" fill="#f1f2f4"/><rect x="0" y="90" width="10" height="9.5" fill="#4c6a88"/><rect x="17" y="62" width="3" height="36" fill="#8a7a50"/><rect x="22" y="66" width="2.4" height="32" fill="#94845a"/><path d="M16 10Q21 7 22 14Q30 13 33 20Q36 28 33 36Q36 46 32 56Q35 66 30 72Q27 82 21 80Q14 84 11 76Q4 72 6 62Q1 54 5 46Q1 36 6 30Q4 20 12 18Q12 12 16 10Z" fill="#2f4a22"/><path d="M12 28Q18 24 24 30Q28 38 22 44Q14 44 12 28Z" fill="#3e5c2c"/><rect x="12" y="93" width="18" height="6.5" fill="#202020"/><text x="47.3" y="53.8" font-family="Liberation Sans, sans-serif" font-weight="700" font-size="14" fill="#5c5c7c">Service <tspan fill="#2a6fc0">Desk</tspan></text><rect x="132.7" y="12.2" width="8.6" height="3.6" rx="1.2" fill="#2a62c4" transform="rotate(-32 137 14)"/><rect x="142.7" y="15.900000000000002" width="8.6" height="3.4" rx="1.2" fill="#e85040" transform="rotate(-14 147 17.6)"/><rect x="152.5" y="22.5" width="7" height="3" rx="1.2" fill="#f0c234" transform="rotate(22 156 24)"/><rect x="126.89999999999999" y="20.5" width="5.4" height="3" rx="1.2" fill="#f0c234" transform="rotate(-60 129.6 22)"/><rect x="133.70000000000002" y="21.799999999999997" width="7.4" height="3.2" rx="1.2" fill="#3c3c7c" transform="rotate(-32 137.4 23.4)"/><rect x="141.9" y="24.7" width="7.4" height="3.4" rx="1.2" fill="#2a74d4" transform="rotate(-22 145.6 26.4)"/><rect x="126.7" y="28.0" width="4.6" height="2.8" rx="1.2" fill="#e85040" transform="rotate(-75 129 29.4)"/><rect x="131.9" y="29.6" width="5.4" height="2.8" rx="1.2" fill="#3c3c7c" transform="rotate(-40 134.6 31)"/><rect x="138.0" y="31.9" width="6" height="3" rx="1.2" fill="#2a74d4" transform="rotate(-18 141 33.4)"/><rect x="146.1" y="30.9" width="7" height="3" rx="1.2" fill="#e85040" transform="rotate(8 149.6 32.4)"/><rect x="154.5" y="32.1" width="9" height="3.8" rx="1.2" fill="#3c3c7c" transform="rotate(38 159 34)"/><rect x="128.70000000000002" y="35.5" width="3.4" height="2.2" rx="1.2" fill="#2a62c4" transform="rotate(-60 130.4 36.6)"/><rect x="132.9" y="35.3" width="3.4" height="2.2" rx="1.2" fill="#2a62c4" transform="rotate(-30 134.6 36.4)"/></svg><div class="txt" style="left:46.4px;top:618.6px;font-size:13.4px;line-height:1;color:#b4825a">1</div><div class="txt" style="left:250.4px;top:618.6px;font-size:13.4px;line-height:1;color:#cfc8c0">2</div><div class="txt" style="left:457px;top:618.6px;font-size:13.4px;line-height:1;color:#cfc8c0">3</div><div class="txt" style="left:663.6px;top:618.6px;font-size:13.4px;line-height:1;color:#cfc8c0">4</div></div>
<div id="bottomstrip"><div class="abs" style="left:1236.7px;top:6.7000000000000455px;width:190px;height:99.5px;background:#2d2d2d"></div><svg class="abs" style="left:1308.0px;top:33.0px" width="47.0" height="47.0" viewBox="0 0 47 47"><defs><clipPath id="cpa"><circle cx="23.5" cy="23.5" r="23.5"/></clipPath></defs><g clip-path="url(#cpa)"><rect width="47" height="47" fill="#f6f6f6"/><path d="M15.4 36Q13.6 22 16.6 12.4Q19 5.4 24.4 5.4T31.8 12Q34.2 22 32.4 36Z" fill="#8a6040"/><path d="M6 47Q7 35.4 16 33.6L23.6 37L31.6 33.6Q40 35.4 41.4 47Z" fill="#b98a52"/><path d="M20.8 27.6H27V34.6L23.8 38.4L20.8 34.6Z" fill="#d9a88a"/><ellipse cx="24" cy="18.6" rx="5.3" ry="7.3" fill="#e2b49a"/><path d="M18 15.6Q19.4 9.4 24.2 9.2Q29.4 9.4 30.2 16.4Q27.6 12.4 24 12.2Q20.4 12.6 18 15.6Z" fill="#7c5638"/><path d="M18.2 16Q16.8 26 18.2 35L21 34.4Q18.8 25 19.6 16Z M29.8 16Q31.4 26 29.8 35L27.2 34.4Q29.4 25 28.6 16Z" fill="#8a6040"/></g></svg><div class="txt" style="left:1252px;top:87.39999999999998px;font-size:12.2px;line-height:1;color:#e6e6e6;font-weight:400;">Sam Brown</div><svg class="abs" style="left:1325.4px;top:85.39999999999998px;" width="15" height="15" viewBox="0 0 26 26"><rect x="9.4" y="3" width="7" height="12.4" rx="3.5" fill="#d0d0d0"/><path d="M6.2 11.6V12.2Q6.2 18 12.9 18T19.6 12.2V11.6M12.9 18V22.4M9.6 22.6H16.2" stroke="#d0d0d0" stroke-width="2" fill="none" stroke-linecap="round"/><path d="M3.4 3L21.6 23.4" stroke="#2d2d2d" stroke-width="4"/><path d="M3 2.6L22.4 24.2" stroke="#d0d0d0" stroke-width="2" stroke-linecap="round"/></svg><div class="abs" style="left:1497.2px;top:32.39999999999998px;width:47px;height:47px;border-radius:50%;background:#d6e6f0"></div><div class="txt" style="left:1508.2px;top:47.200000000000045px;font-size:18.5px;line-height:1;color:#3a566a;font-weight:400;-webkit-text-stroke:0.5px #3a566a">DS</div></div>
</div>
<div id="taskbar"><div id="search"></div><svg class="abs" style="left:14.5px;top:12.5px;" width="18" height="18" viewBox="0 0 18 18"><path d="M0.4 2.9L7.4 1.9V8.5H0.4Z M8.4 1.75L17.5 0.4V8.5H8.4Z M0.4 9.5H7.4V16.1L0.4 15.1Z M8.4 9.5H17.5V17.6L8.4 16.25Z" fill="#ffffff"/></svg><svg class="abs" style="left:60px;top:12px;" width="20" height="20" viewBox="0 0 20 20"><circle cx="12" cy="7.4" r="5.2" stroke="#3a3a3a" stroke-width="1.5" fill="none"/><path d="M8.2 11.4L1.8 17.6" stroke="#3a3a3a" stroke-width="1.6" stroke-linecap="round"/></svg><div class="txt" style="left:91.5px;top:15.200000000000045px;font-size:15.5px;line-height:1;color:#4a4a4a;font-weight:400;">Type here to search</div><svg class="abs" style="left:426px;top:11.5px;" width="21" height="21" viewBox="0 0 21 21"><circle cx="10.3" cy="10.3" r="7.2" stroke="#e6e8f2" stroke-width="2.4" fill="none"/></svg><svg class="abs" style="left:476px;top:12px;" width="22" height="20" viewBox="0 0 22 20"><g stroke="#b4b8c6" stroke-width="1.5" fill="none"><path d="M2.4 1.4V18M12.6 1.4V18M2.4 5.4H12.6M2.4 13.8H12.6"/></g><rect x="16" y="1.4" width="2" height="3.4" fill="#b4b8c6"/><rect x="16" y="6.6" width="2.2" height="2.6" fill="#e6e8f2"/><rect x="16" y="11" width="2" height="7" fill="#b4b8c6"/></svg></div>
<div id="phone"><div class="abs" style="left:0;top:0;width:310px;height:37px;background:#2a2829"></div><div class="abs" style="left:17.5px;top:7.699999999999989px;width:45.8px;height:17px;border-radius:8.5px;background:#ee3b30"></div><div class="txt" style="left:26.200000000000045px;top:10.900000000000006px;font-size:11px;line-height:1;color:#ffffff;font-weight:700;">11:56</div><div class="abs" style="left:251.79999999999995px;top:5.300000000000011px;width:3px;height:3px;border-radius:50%;background:#e08a1e"></div><svg class="abs" style="left:248px;top:15.5px;" width="16" height="8.3" viewBox="0 0 16 8.3"><rect x="0.0" y="5.1000000000000005" width="2.7" height="3.2" rx="0.6" fill="#fff"/><rect x="4.1" y="3.500000000000001" width="2.7" height="4.8" rx="0.6" fill="#8a8a8a"/><rect x="8.2" y="1.700000000000001" width="2.7" height="6.6" rx="0.6" fill="#8a8a8a"/><rect x="12.299999999999999" y="0.0" width="2.7" height="8.3" rx="0.6" fill="#8a8a8a"/></svg><svg class="abs" style="left:266.20000000000005px;top:14px;" width="12.4" height="10" viewBox="0 0 12.4 10"><path d="M0.6 3.4Q6.2 -1.6 11.8 3.4L10.4 4.8Q6.2 1.2 2 4.8Z M2.9 5.8Q6.2 3 9.5 5.8L8.1 7.2Q6.2 5.6 4.3 7.2Z M6.2 9.6L4.9 8.1Q6.2 7 7.5 8.1Z" fill="#fff"/></svg><svg class="abs" style="left:282.5999999999999px;top:15px;" width="20" height="9" viewBox="0 0 20 9"><rect x="0.5" y="0.5" width="16.4" height="8" rx="2.2" stroke="#8a8a8a" stroke-width="1" fill="none"/><rect x="1.6" y="1.6" width="8.2" height="5.8" rx="1.2" fill="#f6d21e"/><path d="M17.8 3V6Q19 5.6 19 4.5T17.8 3Z" fill="#8a8a8a"/></svg><svg class="abs" style="left:-0.2999999999999545px;top:188.2px" width="315.5" height="177.5" viewBox="0 0 695.5 391.5" preserveAspectRatio="none"><use href="#art"/></svg><svg class="abs" style="left:19px;top:478px;" width="10" height="14" viewBox="0 0 10 14"><path d="M8.2 0.8L2 6.8L8.2 12.8" stroke="#c8c8c8" stroke-width="1.3" fill="none"/></svg><div class="txt" style="left:34.299999999999955px;top:480.6px;font-size:9.3px;line-height:1;color:#d8d8d8;font-weight:700;">1 of 4</div><div class="abs" style="left:125px;top:472.9px;width:65.5px;height:23.7px;border:1px solid #8a8a8a;border-radius:1.5px"></div><div class="txt" style="left:130.5999999999999px;top:481px;font-size:9.2px;line-height:1;color:#e8e8e8;font-weight:700;letter-spacing:-0.15px">Take Control</div><svg class="abs" style="left:286px;top:478.5px;" width="10" height="14" viewBox="0 0 10 14"><path d="M1.8 0.8L8 6.6L1.8 12.4" stroke="#e0e0e0" stroke-width="1.4" fill="none"/></svg><div class="abs" style="left:173.29999999999995px;top:518px;width:79.2px;height:83px;background:#2b2a2c"></div><div class="abs" style="left:257px;top:518px;width:60px;height:83px;background:#2b2a2c"></div><div class="abs" style="left:196.4000000000001px;top:542.6px;width:32px;height:32px;border-radius:50%;background:#c9dde7"></div><div class="txt" style="left:203.5999999999999px;top:552.6px;font-size:12.6px;line-height:1;color:#3a566a;font-weight:400;-webkit-text-stroke:0.35px #3a566a">DS</div><div class="txt" style="left:191px;top:584.8px;font-size:8px;line-height:1;color:#c4c4c4;font-weight:400;">Demo S.</div><svg class="abs" style="left:225.5999999999999px;top:583.8px;" width="9" height="9" viewBox="0 0 26 26"><rect x="9.4" y="3" width="7" height="12.4" rx="3.5" fill="#c4c4c4"/><path d="M6.2 11.6V12.2Q6.2 18 12.9 18T19.6 12.2V11.6M12.9 18V22.4M9.6 22.6H16.2" stroke="#c4c4c4" stroke-width="2" fill="none" stroke-linecap="round"/><path d="M3.4 3L21.6 23.4" stroke="#2b2a2c" stroke-width="4"/><path d="M3 2.6L22.4 24.2" stroke="#c4c4c4" stroke-width="2" stroke-linecap="round"/></svg><svg class="abs" style="left:271.6px;top:545.7px" width="25.8" height="25.8" viewBox="0 0 47 47"><defs><clipPath id="cpb"><circle cx="23.5" cy="23.5" r="23.5"/></clipPath></defs><g clip-path="url(#cpb)"><rect width="47" height="47" fill="#f6f6f6"/><path d="M15.4 36Q13.6 22 16.6 12.4Q19 5.4 24.4 5.4T31.8 12Q34.2 22 32.4 36Z" fill="#8a6040"/><path d="M6 47Q7 35.4 16 33.6L23.6 37L31.6 33.6Q40 35.4 41.4 47Z" fill="#b98a52"/><path d="M20.8 27.6H27V34.6L23.8 38.4L20.8 34.6Z" fill="#d9a88a"/><ellipse cx="24" cy="18.6" rx="5.3" ry="7.3" fill="#e2b49a"/><path d="M18 15.6Q19.4 9.4 24.2 9.2Q29.4 9.4 30.2 16.4Q27.6 12.4 24 12.2Q20.4 12.6 18 15.6Z" fill="#7c5638"/><path d="M18.2 16Q16.8 26 18.2 35L21 34.4Q18.8 25 19.6 16Z M29.8 16Q31.4 26 29.8 35L27.2 34.4Q29.4 25 28.6 16Z" fill="#8a6040"/></g></svg><div class="abs" style="left:0;top:601px;width:310px;height:85px;background:#292829"></div><svg class="abs" style="left:37px;top:617.5px;" width="22" height="22" viewBox="0 0 26 26"><path d="M2.2 8.4Q2.2 6.2 4.4 6.2H13.4Q15.6 6.2 15.6 8.4V10.4L21 6.8Q22.6 6 22.6 7.8V18Q22.6 19.8 21 19L15.6 15.6V17.4Q15.6 19.6 13.4 19.6H4.4Q2.2 19.6 2.2 17.4Z" fill="#fff"/><path d="M3 2.8L22 23.4" stroke="#292829" stroke-width="3.6"/><path d="M3 2.8L22.6 24" stroke="#fff" stroke-width="1.6" stroke-linecap="round"/></svg><svg class="abs" style="left:91.59999999999991px;top:617.2px;" width="22" height="22" viewBox="0 0 26 26"><rect x="9.4" y="3" width="7" height="12.4" rx="3.5" fill="#fff"/><path d="M6.2 11.6V12.2Q6.2 18 12.9 18T19.6 12.2V11.6M12.9 18V22.4M9.6 22.6H16.2" stroke="#fff" stroke-width="1.6" fill="none" stroke-linecap="round"/><path d="M3.4 3L21.6 23.4" stroke="#292829" stroke-width="3.6"/><path d="M3 2.6L22.4 24.2" stroke="#fff" stroke-width="1.6" stroke-linecap="round"/></svg><svg class="abs" style="left:146px;top:618px;" width="24" height="20" viewBox="0 0 24 20"><g stroke="#fff" stroke-width="1.4" fill="none" stroke-linejoin="round" stroke-linecap="round"><path d="M2 7.2H5.6L11.6 2.6V17.8L5.6 13.2H2Z"/><path d="M14.4 6.6Q16.4 10.2 14.4 13.8M17.2 4.2Q20.6 10.2 17.2 16.2"/></g></svg><div class="abs" style="left:204.0px;top:626.8px;width:3.6px;height:3.6px;border-radius:50%;background:#fff"></div><div class="abs" style="left:210.5999999999999px;top:626.8px;width:3.6px;height:3.6px;border-radius:50%;background:#fff"></div><div class="abs" style="left:217.20000000000005px;top:626.8px;width:3.6px;height:3.6px;border-radius:50%;background:#fff"></div><div class="abs" style="left:244.4000000000001px;top:605.4px;width:45.6px;height:46px;border-radius:3px;background:#c4314b"></div><svg class="abs" style="left:256.70000000000005px;top:622px;" width="22" height="13" viewBox="0 0 24 14"><path d="M2 8.6Q2 5.8 4.4 4.6Q8 3 12 3T19.6 4.6Q22 5.8 22 8.6V9.6Q22 11.2 20.4 10.9L17.4 10.3Q16.2 10 16.2 8.8V7.6Q14.2 6.8 12 6.8T7.8 7.6V8.8Q7.8 10 6.6 10.3L3.6 10.9Q2 11.2 2 9.6Z" fill="#fff"/></svg></div>
</body></html>
